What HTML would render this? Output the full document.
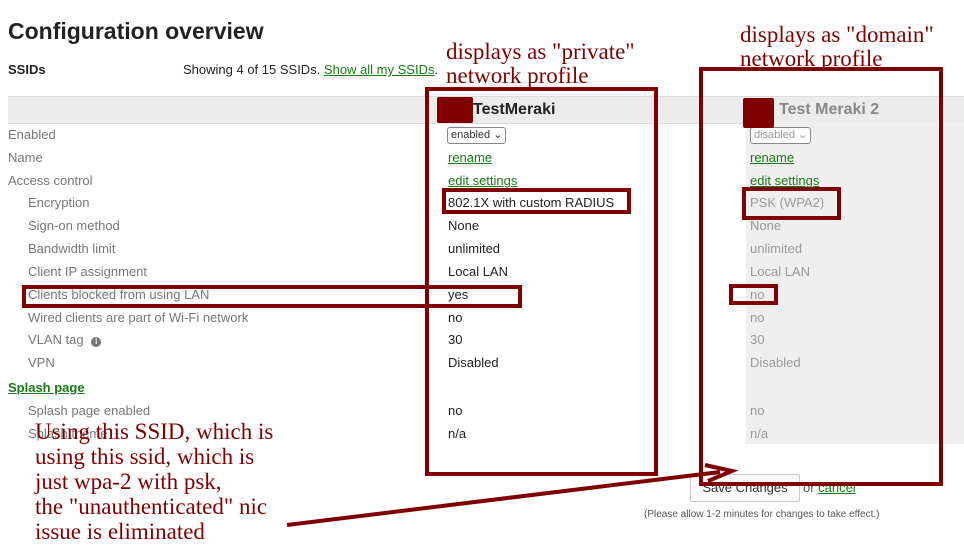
<!DOCTYPE html><html><head><style>
body{margin:0;width:964px;height:552px;position:relative;background:#fff;font-family:"Liberation Sans",sans-serif;overflow:hidden}
.a{position:absolute;white-space:nowrap}
.t{font-size:13px;color:#222;line-height:16px}
.l{color:#777}
.g{color:#999}
.lk{color:#1a7a1a;text-decoration:underline}
.s{font-family:"Liberation Serif",serif;color:#800000;font-size:23px;line-height:24px}
.b{position:absolute;border:4px solid #800000;box-sizing:border-box}
.sel{position:absolute;border:1px solid #888;border-radius:3px;font-size:11px;padding:0 3px;height:15px;line-height:15px;background:#fff}
</style></head><body>
<div class="a" style="left:8px;top:18px;font-size:23px;font-weight:bold;color:#222">Configuration overview</div>
<div class="a t" style="left:8px;top:62px;font-weight:bold">SSIDs</div>
<div class="a t" style="left:183px;top:62px">Showing 4 of 15 SSIDs. <span class="lk">Show all my SSIDs</span>.</div>
<div class="a" style="left:8px;top:96px;width:956px;height:26px;background:#ececec;border-top:1px solid #ddd;border-bottom:1px solid #ddd"></div>
<div class="a" style="left:746px;top:122px;width:218px;height:322px;background:#efefef"></div>
<div class="a" style="left:473px;top:101px;font-size:16px;font-weight:bold;color:#222">TestMeraki</div>
<div class="a" style="left:779px;top:101px;font-size:16px;font-weight:bold;color:#888">Test Meraki 2</div>
<div class="sel" style="left:447px;top:127px;color:#333">enabled ⌄</div>
<div class="sel" style="left:750px;top:127px;color:#999">disabled ⌄</div>
<div class="a t l" style="left:8px;top:127px">Enabled</div>
<div class="a t l" style="left:8px;top:150px">Name</div>
<div class="a t l" style="left:8px;top:173px">Access control</div>
<div class="a t l" style="left:28px;top:195px">Encryption</div>
<div class="a t l" style="left:28px;top:218px">Sign-on method</div>
<div class="a t l" style="left:28px;top:241px">Bandwidth limit</div>
<div class="a t l" style="left:28px;top:264px">Client IP assignment</div>
<div class="a t l" style="left:28px;top:287px">Clients blocked from using LAN</div>
<div class="a t l" style="left:28px;top:310px">Wired clients are part of Wi-Fi network</div>
<div class="a t l" style="left:28px;top:332px">VLAN tag <span style="display:inline-block;width:10px;height:10px;border-radius:50%;background:#777;color:#fff;font-size:8px;line-height:10px;text-align:center;margin-left:4px;font-weight:bold">i</span></div>
<div class="a t l" style="left:28px;top:355px">VPN</div>
<div class="a t lk" style="left:8px;top:380px;font-weight:bold">Splash page</div>
<div class="a t l" style="left:28px;top:403px">Splash page enabled</div>
<div class="a t l" style="left:28px;top:426px">Splash theme</div>
<div class="a t lk" style="left:448px;top:150px">rename</div>
<div class="a t lk" style="left:448px;top:173px">edit settings</div>
<div class="a t" style="left:448px;top:195px">802.1X with custom RADIUS</div>
<div class="a t" style="left:448px;top:218px">None</div>
<div class="a t" style="left:448px;top:241px">unlimited</div>
<div class="a t" style="left:448px;top:264px">Local LAN</div>
<div class="a t" style="left:448px;top:287px">yes</div>
<div class="a t" style="left:448px;top:310px">no</div>
<div class="a t" style="left:448px;top:332px">30</div>
<div class="a t" style="left:448px;top:355px">Disabled</div>
<div class="a t" style="left:448px;top:403px">no</div>
<div class="a t" style="left:448px;top:426px">n/a</div>
<div class="a t lk" style="left:750px;top:150px">rename</div>
<div class="a t lk" style="left:750px;top:173px">edit settings</div>
<div class="a t g" style="left:750px;top:195px">PSK (WPA2)</div>
<div class="a t g" style="left:750px;top:218px">None</div>
<div class="a t g" style="left:750px;top:241px">unlimited</div>
<div class="a t g" style="left:750px;top:264px">Local LAN</div>
<div class="a t g" style="left:750px;top:287px">no</div>
<div class="a t g" style="left:750px;top:310px">no</div>
<div class="a t g" style="left:750px;top:332px">30</div>
<div class="a t g" style="left:750px;top:355px">Disabled</div>
<div class="a t g" style="left:750px;top:403px">no</div>
<div class="a t g" style="left:750px;top:426px">n/a</div>
<div class="a" style="left:690px;top:474px;width:108px;height:26px;border:1px solid #ccc;border-radius:2px;background:#fafafa;font-size:13px;line-height:26px;text-align:center;color:#333">Save Changes</div>
<div class="a t" style="left:803px;top:480px;color:#555">or <span class="lk">cancel</span></div>
<div class="a" style="left:644px;top:509px;font-size:10px;color:#555">(Please allow 1-2 minutes for changes to take effect.)</div>
<div class="b" style="left:425px;top:87px;width:233px;height:389px"></div>
<div class="b" style="left:699px;top:67px;width:244px;height:419px"></div>
<div class="b" style="left:442px;top:188px;width:189px;height:26px"></div>
<div class="b" style="left:742px;top:187px;width:99px;height:33px"></div>
<div class="b" style="left:22px;top:285px;width:500px;height:23px"></div>
<div class="b" style="left:729px;top:284px;width:49px;height:21px"></div>
<div class="a" style="left:437px;top:97px;width:36px;height:26px;background:#800000;border-radius:2px"></div>
<div class="a" style="left:743px;top:98px;width:31px;height:30px;background:#800000;border-radius:2px"></div>
<div class="a s" style="left:446px;top:40px">displays as "private"<br>network profile</div>
<div class="a s" style="left:740px;top:23px">displays as "domain"<br>network profile</div>
<div class="a s" style="left:35px;top:419px;line-height:25px">Using this SSID, which is<br>using this ssid, which is<br>just wpa-2 with psk,<br>the "unauthenticated" nic<br>issue is eliminated</div>
<svg class="a" style="left:0;top:0" width="964" height="552"><line x1="287" y1="525" x2="720" y2="472" stroke="#800000" stroke-width="4"/><path d="M705 465 L732 471 L708 481" fill="none" stroke="#800000" stroke-width="4"/></svg>
</body></html>
